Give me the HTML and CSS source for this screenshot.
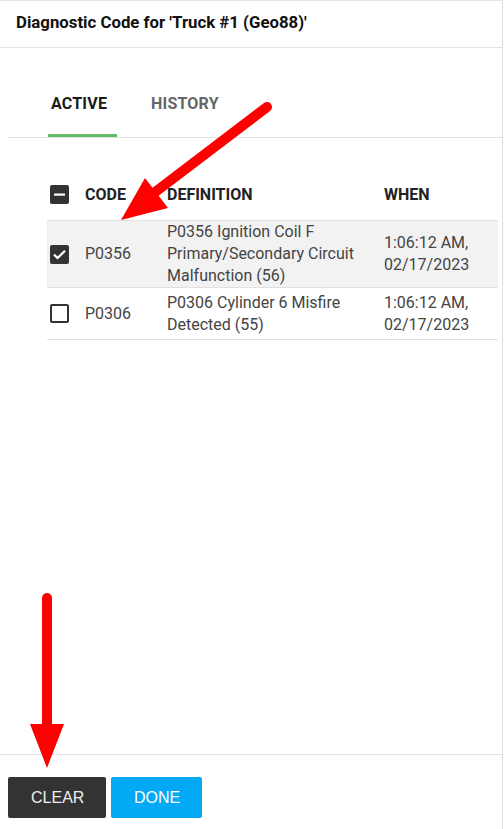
FILE: index.html
```html
<!DOCTYPE html>
<html>
<head>
<meta charset="utf-8">
<link rel="stylesheet" href="styles.css">
</head>
<body>
<div class="dialog">
  <div class="dialog-header">Diagnostic Code for 'Truck #1 (Geo88)'</div>
  <div class="dialog-body">
    <div class="tabs">
      <div class="tab active">ACTIVE</div>
      <div class="tab">HISTORY</div>
    </div>
    <table class="codes">
      <thead>
        <tr>
          <th class="col-check"><span class="cb cb-indeterminate"><svg viewBox="0 0 19 19" width="19" height="19"><rect x="4" y="8.5" width="11" height="2.2" fill="#fff"/></svg></span></th>
          <th class="col-code">CODE</th>
          <th class="col-def">DEFINITION</th>
          <th class="col-when">WHEN</th>
        </tr>
      </thead>
      <tbody>
        <tr class="selected">
          <td class="col-check"><span class="cb cb-checked"><svg viewBox="0 0 19 19" width="19" height="19"><path d="M4 9.6 L7.6 13 L15 5.8" fill="none" stroke="#fff" stroke-width="2.2"/></svg></span></td>
          <td class="col-code">P0356</td>
          <td class="col-def">P0356 Ignition Coil F Primary/Secondary Circuit Malfunction (56)</td>
          <td class="col-when">1:06:12 AM,<br>02/17/2023</td>
        </tr>
        <tr>
          <td class="col-check"><span class="cb cb-empty"></span></td>
          <td class="col-code">P0306</td>
          <td class="col-def">P0306 Cylinder 6 Misfire Detected (55)</td>
          <td class="col-when">1:06:12 AM,<br>02/17/2023</td>
        </tr>
      </tbody>
    </table>
  </div>
  <div class="dialog-footer">
    <button class="btn btn-dark">CLEAR</button>
    <button class="btn btn-primary">DONE</button>
  </div>
</div>
<svg class="annot" width="504" height="829" viewBox="0 0 504 829">
  <line x1="267" y1="107" x2="150" y2="196" stroke="#ff0000" stroke-width="10" stroke-linecap="round"/>
  <polygon points="121,220 145,178 168,208" fill="#ff0000"/>
  <line x1="47" y1="598" x2="47" y2="730" stroke="#ff0000" stroke-width="10" stroke-linecap="round"/>
  <polygon points="30,724 64,724 47,768" fill="#ff0000"/>
</svg>
</body>
</html>
```
FILE: styles.css
```css
html, body {
  margin: 0;
  padding: 0;
  background: #fff;
}
body {
  position: relative;
  width: 504px;
  height: 829px;
  overflow: hidden;
  font-family: Roboto, "Liberation Sans", sans-serif;
}
.dialog {
  width: 503px;
  height: 829px;
  box-sizing: border-box;
  border-top: 1px solid #e6e6e6;
  border-right: 1px solid #dcdcdc;
  display: flex;
  flex-direction: column;
}
.dialog-header {
  height: 47px;
  flex: none;
  box-sizing: border-box;
  padding: 11px 16px 0;
  font-size: 16.8px;
  line-height: 20px;
  font-weight: 700;
  color: #111;
  border-bottom: 1px solid #e3e3e3;
}
.dialog-body {
  flex: 1;
  padding: 0 0 0 8px;
}
.tabs {
  display: flex;
  height: 90px;
  box-sizing: border-box;
  padding-top: 46px;
  padding-left: 40px;
  border-bottom: 1px solid #e3e3e3;
}
.tab {
  font-size: 16px;
  font-weight: 700;
  color: #666;
  letter-spacing: 0.2px;
  padding: 0 0 0 3px;
  margin-right: 31px;
  height: 43px;
  box-sizing: border-box;
  line-height: 20px;
}
.tab.active {
  color: #1a1a1a;
  border-bottom: 3px solid #66bb6a;
  width: 69px;
}
.codes {
  margin-left: 39px;
  margin-top: 30px;
  width: 451px;
  border-collapse: collapse;
  font-size: 16px;
  color: #444;
}
.codes th {
  text-align: left;
  font-weight: 700;
  color: #222;
  height: 52px;
  padding: 0;
}
.codes td {
  padding: 0;
  line-height: 22px;
  vertical-align: middle;
}
.codes tr {
  border-bottom: 1px solid #e0e0e0;
}
.codes tbody tr {
  height: 52px;
}
.codes tr.selected {
  background: #f2f2f2;
  border-top: 1px solid #e0e0e0;
}
.col-check {
  width: 35px;
  padding-left: 3px !important;
}
.col-code { width: 82px; }
.col-def { width: 217px; }
.cb {
  display: block;
  width: 19px;
  height: 19px;
  border-radius: 2px;
  box-sizing: border-box;
}
.cb svg { display: block; }
.cb-indeterminate, .cb-checked {
  background: #333;
}
.cb-empty {
  border: 2px solid #333;
}
.dialog-footer {
  flex: none;
  border-top: 1px solid #e3e3e3;
  height: 75px;
  padding: 22px 0 0 8px;
  box-sizing: border-box;
  display: flex;
  gap: 5px;
  align-items: flex-start;
}
.btn {
  font-family: "Liberation Sans", Arial, sans-serif;
  font-size: 16px;
  height: 41px;
  padding: 0 22px;
  border: 1px solid transparent;
  border-radius: 2px;
  cursor: pointer;
}
.btn-dark {
  background: #333;
  color: #eee;
  width: 98px;
}
.btn-primary {
  background: #03a9f4;
  color: #fff;
  width: 91px;
}
.annot {
  position: absolute;
  left: 0;
  top: 0;
  pointer-events: none;
}
```
